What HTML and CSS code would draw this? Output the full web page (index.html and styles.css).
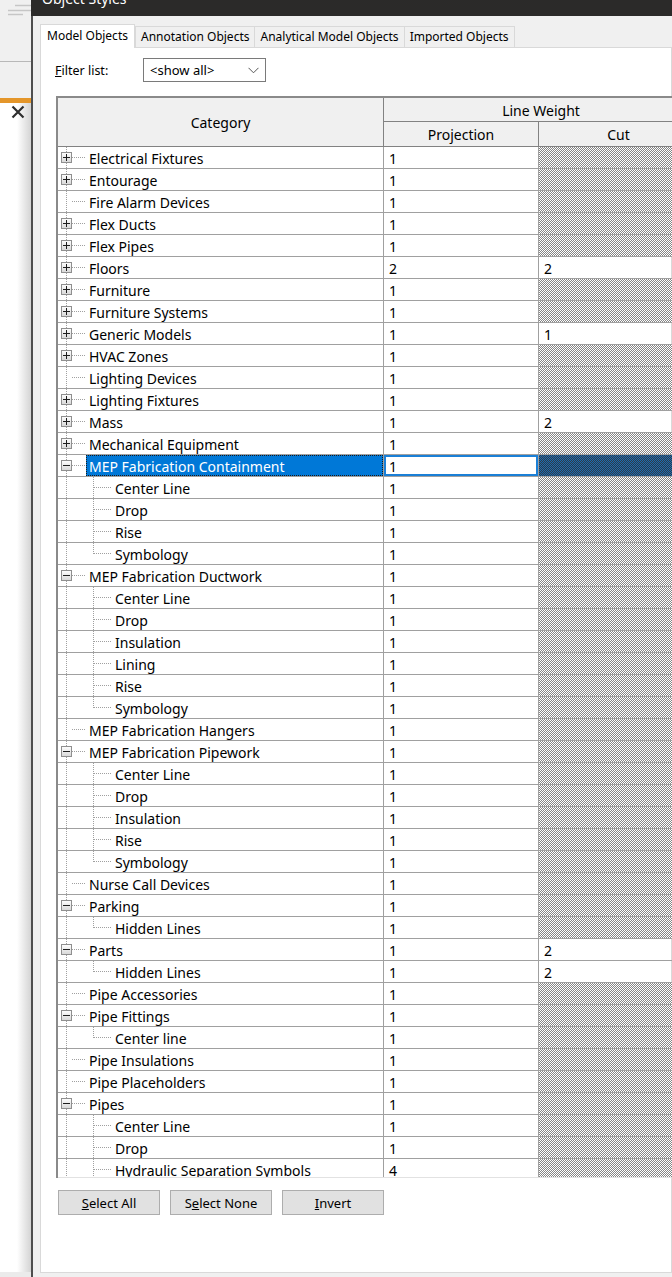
FILE: index.html
```html
<!DOCTYPE html>
<html>
<head>
<meta charset="utf-8">
<title>Object Styles</title>
<link rel="stylesheet" href="styles.css">
</head>
<body>
<div class="side">
  <div class="side-top">
    <svg class="menu-ic" width="31" height="14" viewBox="0 0 31 14"><path d="M15 2.5H31M8 7.5H31M8 11.5H23" stroke="#c6c6c6" stroke-width="1.3" fill="none"/></svg>
  </div>
  <div class="side-mid"></div>
  <div class="side-accent"></div>
  <div class="side-main">
    <svg width="14" height="14" viewBox="0 0 14 14"><path d="M1.5 1.5L12.5 12.5M12.5 1.5L1.5 12.5" stroke="#2e2e2e" stroke-width="2.2" fill="none"/></svg>
  </div>
  <div class="side-foot"></div>
</div>
<div class="dialog">
  <div class="titlebar"><span class="title">Object Styles</span></div>
  <div class="body">
    <div class="tabs">
      <div class="tab active">Model Objects</div>
      <div class="tab">Annotation Objects</div>
      <div class="tab">Analytical Model Objects</div>
      <div class="tab">Imported Objects</div>
    </div>
    <div class="panel">
      <div class="filter">
        <span class="filter-label"><u>F</u>ilter list:</span>
        <div class="select"><span>&lt;show all&gt;</span><svg width="11" height="7" viewBox="0 0 11 7"><path d="M0.5 0.8L5.5 5.8L10.5 0.8" stroke="#555" stroke-width="1" fill="none"/></svg></div>
      </div>
      <div class="grid">
        <div class="hdr">
          <div class="h-cat">Category</div>
          <div class="h-grp">
            <div class="h-lw">Line Weight</div>
            <div class="h-sub"><div class="h-proj">Projection</div><div class="h-cut">Cut</div></div>
          </div>
        </div>
        <div class="rows">
          <div class="row"><div class="cat"><span class="g0 br"><i class="box plus"></i></span><span class="lbl">Electrical Fixtures</span></div><div class="proj">1</div><div class="cut hatch"></div></div>
          <div class="row"><div class="cat"><span class="g0 br"><i class="box plus"></i></span><span class="lbl">Entourage</span></div><div class="proj">1</div><div class="cut hatch"></div></div>
          <div class="row"><div class="cat"><span class="g0 br"></span><span class="lbl">Fire Alarm Devices</span></div><div class="proj">1</div><div class="cut hatch"></div></div>
          <div class="row"><div class="cat"><span class="g0 br"><i class="box plus"></i></span><span class="lbl">Flex Ducts</span></div><div class="proj">1</div><div class="cut hatch"></div></div>
          <div class="row"><div class="cat"><span class="g0 br"><i class="box plus"></i></span><span class="lbl">Flex Pipes</span></div><div class="proj">1</div><div class="cut hatch"></div></div>
          <div class="row"><div class="cat"><span class="g0 br"><i class="box plus"></i></span><span class="lbl">Floors</span></div><div class="proj">2</div><div class="cut">2</div></div>
          <div class="row"><div class="cat"><span class="g0 br"><i class="box plus"></i></span><span class="lbl">Furniture</span></div><div class="proj">1</div><div class="cut hatch"></div></div>
          <div class="row"><div class="cat"><span class="g0 br"><i class="box plus"></i></span><span class="lbl">Furniture Systems</span></div><div class="proj">1</div><div class="cut hatch"></div></div>
          <div class="row"><div class="cat"><span class="g0 br"><i class="box plus"></i></span><span class="lbl">Generic Models</span></div><div class="proj">1</div><div class="cut">1</div></div>
          <div class="row"><div class="cat"><span class="g0 br"><i class="box plus"></i></span><span class="lbl">HVAC Zones</span></div><div class="proj">1</div><div class="cut hatch"></div></div>
          <div class="row"><div class="cat"><span class="g0 br"></span><span class="lbl">Lighting Devices</span></div><div class="proj">1</div><div class="cut hatch"></div></div>
          <div class="row"><div class="cat"><span class="g0 br"><i class="box plus"></i></span><span class="lbl">Lighting Fixtures</span></div><div class="proj">1</div><div class="cut hatch"></div></div>
          <div class="row"><div class="cat"><span class="g0 br"><i class="box plus"></i></span><span class="lbl">Mass</span></div><div class="proj">1</div><div class="cut">2</div></div>
          <div class="row"><div class="cat"><span class="g0 br"><i class="box plus"></i></span><span class="lbl">Mechanical Equipment</span></div><div class="proj">1</div><div class="cut hatch"></div></div>
          <div class="row"><div class="cat"><span class="g0 br"><i class="box minus"></i></span><span class="lbl sel">MEP Fabrication Containment</span></div><div class="proj edit">1</div><div class="cut hatch-sel"></div></div>
          <div class="row"><div class="cat"><span class="g0"></span><span class="g1 br"></span><span class="lbl">Center Line</span></div><div class="proj">1</div><div class="cut hatch"></div></div>
          <div class="row"><div class="cat"><span class="g0"></span><span class="g1 br"></span><span class="lbl">Drop</span></div><div class="proj">1</div><div class="cut hatch"></div></div>
          <div class="row"><div class="cat"><span class="g0"></span><span class="g1 br"></span><span class="lbl">Rise</span></div><div class="proj">1</div><div class="cut hatch"></div></div>
          <div class="row"><div class="cat"><span class="g0"></span><span class="g1 br last"></span><span class="lbl">Symbology</span></div><div class="proj">1</div><div class="cut hatch"></div></div>
          <div class="row"><div class="cat"><span class="g0 br"><i class="box minus"></i></span><span class="lbl">MEP Fabrication Ductwork</span></div><div class="proj">1</div><div class="cut hatch"></div></div>
          <div class="row"><div class="cat"><span class="g0"></span><span class="g1 br"></span><span class="lbl">Center Line</span></div><div class="proj">1</div><div class="cut hatch"></div></div>
          <div class="row"><div class="cat"><span class="g0"></span><span class="g1 br"></span><span class="lbl">Drop</span></div><div class="proj">1</div><div class="cut hatch"></div></div>
          <div class="row"><div class="cat"><span class="g0"></span><span class="g1 br"></span><span class="lbl">Insulation</span></div><div class="proj">1</div><div class="cut hatch"></div></div>
          <div class="row"><div class="cat"><span class="g0"></span><span class="g1 br"></span><span class="lbl">Lining</span></div><div class="proj">1</div><div class="cut hatch"></div></div>
          <div class="row"><div class="cat"><span class="g0"></span><span class="g1 br"></span><span class="lbl">Rise</span></div><div class="proj">1</div><div class="cut hatch"></div></div>
          <div class="row"><div class="cat"><span class="g0"></span><span class="g1 br last"></span><span class="lbl">Symbology</span></div><div class="proj">1</div><div class="cut hatch"></div></div>
          <div class="row"><div class="cat"><span class="g0 br"></span><span class="lbl">MEP Fabrication Hangers</span></div><div class="proj">1</div><div class="cut hatch"></div></div>
          <div class="row"><div class="cat"><span class="g0 br"><i class="box minus"></i></span><span class="lbl">MEP Fabrication Pipework</span></div><div class="proj">1</div><div class="cut hatch"></div></div>
          <div class="row"><div class="cat"><span class="g0"></span><span class="g1 br"></span><span class="lbl">Center Line</span></div><div class="proj">1</div><div class="cut hatch"></div></div>
          <div class="row"><div class="cat"><span class="g0"></span><span class="g1 br"></span><span class="lbl">Drop</span></div><div class="proj">1</div><div class="cut hatch"></div></div>
          <div class="row"><div class="cat"><span class="g0"></span><span class="g1 br"></span><span class="lbl">Insulation</span></div><div class="proj">1</div><div class="cut hatch"></div></div>
          <div class="row"><div class="cat"><span class="g0"></span><span class="g1 br"></span><span class="lbl">Rise</span></div><div class="proj">1</div><div class="cut hatch"></div></div>
          <div class="row"><div class="cat"><span class="g0"></span><span class="g1 br last"></span><span class="lbl">Symbology</span></div><div class="proj">1</div><div class="cut hatch"></div></div>
          <div class="row"><div class="cat"><span class="g0 br"></span><span class="lbl">Nurse Call Devices</span></div><div class="proj">1</div><div class="cut hatch"></div></div>
          <div class="row"><div class="cat"><span class="g0 br"><i class="box minus"></i></span><span class="lbl">Parking</span></div><div class="proj">1</div><div class="cut hatch"></div></div>
          <div class="row"><div class="cat"><span class="g0"></span><span class="g1 br last"></span><span class="lbl">Hidden Lines</span></div><div class="proj">1</div><div class="cut hatch"></div></div>
          <div class="row"><div class="cat"><span class="g0 br"><i class="box minus"></i></span><span class="lbl">Parts</span></div><div class="proj">1</div><div class="cut">2</div></div>
          <div class="row"><div class="cat"><span class="g0"></span><span class="g1 br last"></span><span class="lbl">Hidden Lines</span></div><div class="proj">1</div><div class="cut">2</div></div>
          <div class="row"><div class="cat"><span class="g0 br"></span><span class="lbl">Pipe Accessories</span></div><div class="proj">1</div><div class="cut hatch"></div></div>
          <div class="row"><div class="cat"><span class="g0 br"><i class="box minus"></i></span><span class="lbl">Pipe Fittings</span></div><div class="proj">1</div><div class="cut hatch"></div></div>
          <div class="row"><div class="cat"><span class="g0"></span><span class="g1 br last"></span><span class="lbl">Center line</span></div><div class="proj">1</div><div class="cut hatch"></div></div>
          <div class="row"><div class="cat"><span class="g0 br"></span><span class="lbl">Pipe Insulations</span></div><div class="proj">1</div><div class="cut hatch"></div></div>
          <div class="row"><div class="cat"><span class="g0 br"></span><span class="lbl">Pipe Placeholders</span></div><div class="proj">1</div><div class="cut hatch"></div></div>
          <div class="row"><div class="cat"><span class="g0 br"><i class="box minus"></i></span><span class="lbl">Pipes</span></div><div class="proj">1</div><div class="cut hatch"></div></div>
          <div class="row"><div class="cat"><span class="g0"></span><span class="g1 br"></span><span class="lbl">Center Line</span></div><div class="proj">1</div><div class="cut hatch"></div></div>
          <div class="row"><div class="cat"><span class="g0"></span><span class="g1 br"></span><span class="lbl">Drop</span></div><div class="proj">1</div><div class="cut hatch"></div></div>
          <div class="row"><div class="cat"><span class="g0"></span><span class="g1 br"></span><span class="lbl">Hydraulic Separation Symbols</span></div><div class="proj">4</div><div class="cut hatch"></div></div>
        </div>
      </div>
      <div class="buttons">
        <button class="btn"><u>S</u>elect All</button>
        <button class="btn">S<u>e</u>lect None</button>
        <button class="btn"><u>I</u>nvert</button>
      </div>
    </div>
  </div>
</div>
</body>
</html>
```
FILE: styles.css
```css
* { box-sizing: border-box; }
html, body { margin: 0; height: 100%; }
body {
  display: flex;
  overflow: hidden;
  font-family: "Noto Sans", "Segoe UI", sans-serif;
  background: #f0f0f0;
  color: #000;
}

/* background application strip */
.side { width: 31px; flex: none; display: flex; flex-direction: column; }
.side-top { height: 62px; background: #f0f0f0; border-bottom: 1px solid #b8b8b8; padding-top: 3px; }
.menu-ic { display: block; }
.side-mid { height: 36px; background: #f0f0f0; }
.side-accent { height: 5px; background: #e4962a; }
.side-main { flex: 1; background: linear-gradient(to right, #fff 0, #fff 55%, #d4d4d4 100%); padding: 2px 0 0 11px; }
.side-main svg { display: block; }
.side-foot { height: 5px; background: #ebebeb; }

/* dialog */
.dialog { flex: 1; min-width: 0; display: flex; flex-direction: column; }
.titlebar { height: 16px; flex: none; background: #2b2a29; color: #fff; overflow: hidden; padding-left: 11px; }
.title { display: block; font-size: 14px; line-height: 16px; margin-top: -9px; }
.body {
  flex: 1; min-height: 0;
  border-left: 2px solid #4e4e4e;
  background: #f0f0f0;
  padding: 8px 0 4px 7px;
  display: flex; flex-direction: column;
}

.tabs { display: flex; align-items: flex-start; height: 24px; margin-bottom: -1px; position: relative; font-size: 12px; flex: none; }
.tab {
  height: 21px; margin-top: 2px; margin-left: -1px;
  padding: 0 5px; line-height: 20px;
  border: 1px solid #d9d9d9; border-bottom: none;
  background: #f0f0f0; white-space: nowrap;
}
.tab.active { height: 24px; margin-top: 0; margin-left: 0; padding: 0 6px; line-height: 21px; background: #fff; margin-right: 1px; }

.panel {
  flex: 1; min-height: 0;
  background: #fff;
  border: 1px solid #d9d9d9;
  padding: 10px 0 0 14px;
  display: flex; flex-direction: column;
}

.filter { display: flex; align-items: center; height: 24px; flex: none; font-size: 12.5px; }
.filter-label { width: 88px; }
.select {
  width: 123px; height: 24px;
  border: 1px solid #7a7a7a;
  display: flex; align-items: center; justify-content: space-between;
  padding: 0 6px 0 6px;
  font-size: 13px;
}

/* grid */
.grid {
  align-self: flex-start; flex: none;
  margin: 14px 0 0 1px;
  border-top: 2px solid #8a8a8a;
  border-left: 2px solid #8a8a8a;
  font-size: 14px;
}
.hdr { display: flex; background: #f0f0f0; border-bottom: 1px solid #828282; }
.h-cat { width: 326px; height: 48px; padding-top: 1px; border-right: 1px solid #828282; display: flex; align-items: center; justify-content: center; }
.h-grp { display: flex; flex-direction: column; }
.h-lw { height: 24px; border-bottom: 1px solid #828282; text-align: center; line-height: 25px; }
.h-sub { display: flex; height: 24px; }
.h-proj { width: 155px; border-right: 1px solid #828282; text-align: center; line-height: 26px; }
.h-cut { width: 159px; text-align: center; line-height: 26px; }

.rows { height: 1031px; overflow: hidden; border-bottom: 1px solid #e2e2e2; }
.row { display: flex; height: 22px; border-bottom: 1px solid #a0a0a0; line-height: 24px; }
.cat { width: 326px; border-right: 1px solid #a0a0a0; display: flex; }
.proj { width: 155px; border-right: 1px solid #a0a0a0; padding-left: 5px; }
.cut { width: 159px; padding-left: 5px; }
.hatch { background: repeating-conic-gradient(#868686 0 25%, #fff 0 50%) 0 0 / 2px 2px; }
.hatch-sel { background: repeating-conic-gradient(#2e3a46 0 25%, #1c6cb4 0 50%) 0 0 / 2px 2px; }
.proj.edit { box-shadow: inset 0 0 0 2px #1a7fd6; }

/* tree lines */
.g0, .g1 {
  flex: none; height: 21px;
  display: flex; align-items: center;
  background-repeat: no-repeat;
  background-image: repeating-linear-gradient(to bottom, #a0a0a0 0 1px, transparent 1px 2px);
}
.g0 { width: 28px; padding-left: 3px; background-size: 1px 100%; background-position: 8px 0; }
.g0.br {
  background-image:
    repeating-linear-gradient(to bottom, #a0a0a0 0 1px, transparent 1px 2px),
    repeating-linear-gradient(to right, #a0a0a0 0 1px, transparent 1px 2px);
  background-size: 1px 100%, 14px 1px;
  background-position: 8px 0, 14px 10px;
}
.g1 { width: 26px; background-size: 1px 100%; background-position: 7px 0; }
.g1.br {
  background-image:
    repeating-linear-gradient(to bottom, #a0a0a0 0 1px, transparent 1px 2px),
    repeating-linear-gradient(to right, #a0a0a0 0 1px, transparent 1px 2px);
  background-size: 1px 100%, 18px 1px;
  background-position: 7px 0, 8px 10px;
}
.g1.br.last { background-size: 1px 11px, 18px 1px; }

.box {
  display: block; width: 11px; height: 11px;
  border: 1px solid #8f8f8f;
  background: linear-gradient(#fdfdfd, #d9d9d9);
}
.box.plus {
  background:
    linear-gradient(#1e1e1e, #1e1e1e) center / 7px 1px no-repeat,
    linear-gradient(#1e1e1e, #1e1e1e) center / 1px 7px no-repeat,
    linear-gradient(#fdfdfd, #d9d9d9);
}
.box.minus {
  background:
    linear-gradient(#1e1e1e, #1e1e1e) center / 7px 1px no-repeat,
    linear-gradient(#fdfdfd, #d9d9d9);
}

.lbl { flex: 1; padding-left: 3px; white-space: nowrap; overflow: hidden; }
.lbl.sel { background: #0078d7; color: #fff; outline: 1px dotted #1a1a1a; outline-offset: -1px; }

/* buttons */
.buttons { display: flex; gap: 10px; margin: 12px 0 0 3px; flex: none; }
.btn {
  width: 102px; height: 25px;
  border: 1px solid #adadad;
  background: #e1e1e1;
  font-family: "Noto Sans", "Segoe UI", sans-serif;
  font-size: 13px; color: #000;
  padding: 0;
}
```
